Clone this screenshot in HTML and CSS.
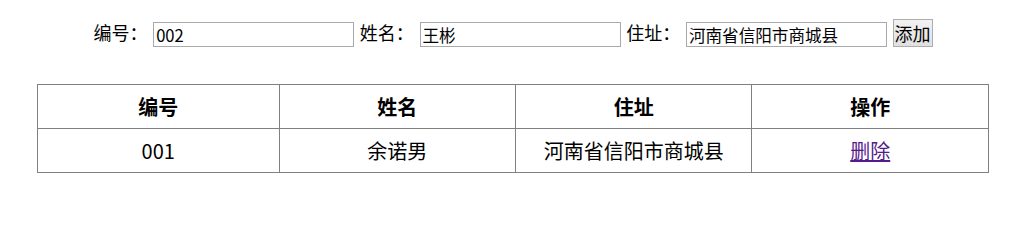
FILE: index.html
```html
<!DOCTYPE html>
<html lang="zh-CN">
<head>
<meta charset="utf-8">
<title>学生信息</title>
<link rel="stylesheet" href="styles.css">
</head>
<body>
<div class="page">
  <form class="form-row">
    <label class="label">编号：</label>
    <input class="field" type="text" value="002">
    <label class="label">姓名：</label>
    <input class="field" type="text" value="王彬">
    <label class="label">住址：</label>
    <input class="field" type="text" value="河南省信阳市商城县">
    <button class="btn" type="button">添加</button>
  </form>
  <table class="grid">
    <thead>
      <tr>
        <th class="c1">编号</th>
        <th class="c2">姓名</th>
        <th class="c3">住址</th>
        <th class="c4">操作</th>
      </tr>
    </thead>
    <tbody>
      <tr>
        <td>001</td>
        <td>余诺男</td>
        <td>河南省信阳市商城县</td>
        <td><a class="del" href="#">删除</a></td>
      </tr>
    </tbody>
  </table>
</div>
</body>
</html>
```
FILE: styles.css
```css
html, body {
  margin: 0;
  padding: 0;
  background: #fff;
}
body {
  font-family: "Noto Sans CJK SC", "Microsoft YaHei", sans-serif;
  color: #000;
}
.page {
  width: 1014px;
  box-sizing: border-box;
  padding: 19px 0 0 12px;
}
.form-row {
  display: flex;
  justify-content: center;
  align-items: flex-end;
  gap: 5.7px;
  margin: 0;
  height: 28px;
}
.label {
  font-size: 18px;
  line-height: 25px;
  height: 25px;
  white-space: nowrap;
  position: relative;
  top: -2px;
}
.field {
  width: 201px;
  height: 25px;
  box-sizing: border-box;
  border: 1px solid #a9a9a9;
  padding: 0 2px;
  margin: 0;
  font-family: "Noto Sans CJK SC", "Microsoft YaHei", sans-serif;
  font-size: 16.6px;
  color: #000;
  outline: none;
}
.btn {
  width: 40px;
  height: 28px;
  box-sizing: border-box;
  padding: 0;
  margin: 0;
  border: 1px solid #adadad;
  border-radius: 0;
  background: linear-gradient(#f2f2f2, #e0e0e0);
  font-family: "Noto Sans CJK SC", "Microsoft YaHei", sans-serif;
  font-size: 18px;
  line-height: 26px;
  color: #000;
}
.grid {
  border-collapse: collapse;
  width: 952px;
  margin: 37px auto 0;
  font-size: 20px;
}
.grid th,
.grid td {
  border: 1px solid #808080;
  height: 43px;
  padding: 0;
  text-align: center;
  vertical-align: middle;
  line-height: 26px;
}
.grid th {
  font-weight: bold;
}
.c1 { width: 241px; }
.c2 { width: 236px; }
.c3 { width: 236px; }
.c4 { width: 236px; }
.del {
  color: #551a8b;
  text-decoration: underline;
}
```
